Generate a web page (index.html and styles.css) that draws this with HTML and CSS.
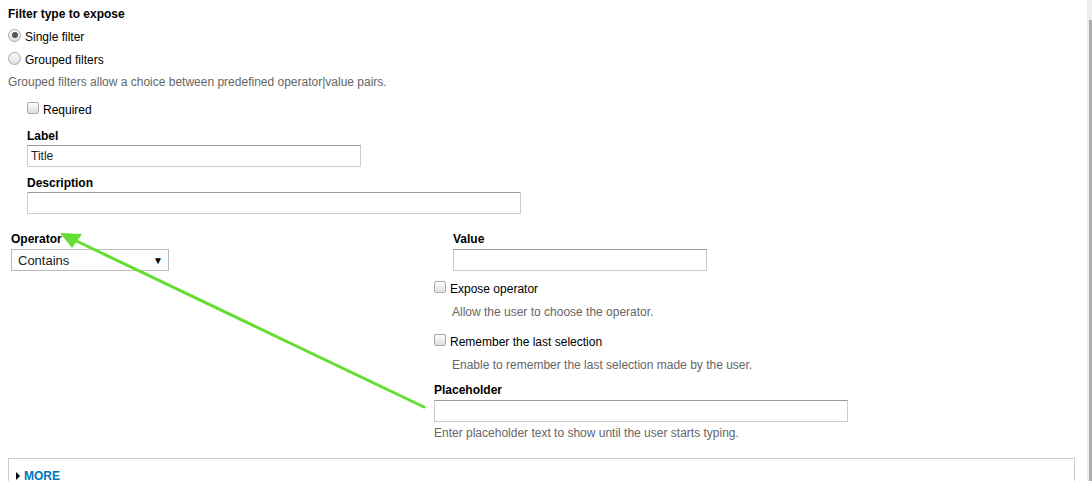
FILE: index.html
```html
<!DOCTYPE html>
<html lang="en">
<head>
    <meta charset="UTF-8">
    <title>Exposed filter settings</title>
    <link rel="stylesheet" href="styles.css">
</head>
<body>
    <div id="page">
        <div id="main">
            <div class="form-item">
                <div class="form-label">Filter type to expose</div>
                <label class="option-row"><input type="radio" name="type" checked> Single filter</label>
                <label class="option-row"><input type="radio" name="type"> Grouped filters</label>
                <div class="description">Grouped filters allow a choice between predefined operator|value pairs.</div>
            </div>

            <div class="exposed-settings">
                <label class="option-row required-row"><input type="checkbox"> Required</label>

                <div class="field">
                    <label class="form-label" for="label">Label</label>
                    <input type="text" id="label" class="text-short" value="Title">
                </div>

                <div class="field">
                    <label class="form-label" for="description">Description</label>
                    <input type="text" id="description" class="text-long">
                </div>
            </div>

            <div class="columns">
                <div class="col-left">
                    <label class="form-label" for="operator">Operator</label>
                    <div class="select-box" id="operator">
                        <span>Contains</span>
                        <span class="caret">&#9660;</span>
                    </div>
                </div>

                <div class="col-right">
                    <div class="value-item">
                        <label class="form-label" for="value">Value</label>
                        <input type="text" id="value" class="text-value">
                    </div>

                    <label class="option-row check-row"><input type="checkbox"> Expose operator</label>
                    <div class="description indented">Allow the user to choose the operator.</div>

                    <label class="option-row check-row remember"><input type="checkbox"> Remember the last selection</label>
                    <div class="description indented">Enable to remember the last selection made by the user.</div>

                    <div class="field placeholder-field">
                        <label class="form-label" for="placeholder">Placeholder</label>
                        <input type="text" id="placeholder" class="text-placeholder">
                        <div class="description">Enter placeholder text to show until the user starts typing.</div>
                    </div>
                </div>
            </div>

            <div class="more-box">
                <a href="#" class="more-link"><span class="more-caret"></span>MORE</a>
            </div>

            <!-- annotation arrow drawn over the form -->
            <svg class="arrow" width="440" height="190" viewBox="0 0 440 190">
                <line x1="424" y1="177" x2="66" y2="6" stroke="#66dd33" stroke-width="3" stroke-linecap="round"/>
                <polygon points="60,3 82,4 72,18" fill="#66dd33"/>
            </svg>
        </div>
        <div id="scroll-strip"><div class="thumb"></div></div>
    </div>
</body>
</html>
```

FILE: styles.css
```css
html, body {
    margin: 0;
    padding: 0;
    height: 100%;
    overflow: hidden;
}

body {
    font-family: "Liberation Sans", Arial, sans-serif;
    font-size: 12px;
    color: #000;
    background-color: #fff;
}

#page {
    display: flex;
    height: 100%;
}

#main {
    flex: 1;
    position: relative;
    padding: 6px 12px 0 8px;
}

#scroll-strip {
    width: 5px;
    background-color: #eeeeee;
}

#scroll-strip .thumb {
    margin: 20px 0 0 2px;
    height: 100%;
    background-color: #acacac;
}

.form-label {
    display: block;
    font-weight: bold;
    line-height: 16px;
}

.option-row {
    display: flex;
    align-items: center;
    height: 18px;
    line-height: 18px;
    margin-top: 5px;
}

.form-item .option-row:first-of-type {
    margin-top: 6px;
}

.description {
    color: #666;
    line-height: 16px;
}

.form-item .description {
    margin-top: 5px;
}

/* custom checkbox and radio */
input[type="checkbox"], input[type="radio"] {
    -webkit-appearance: none;
    appearance: none;
    width: 12px;
    height: 12px;
    margin: 0 4px 0 0;
    border: 1px solid #a9a9a9;
    background: linear-gradient(#fdfdfd, #dedede);
    box-sizing: border-box;
    position: relative;
    top: -2px;
}

input[type="checkbox"] {
    border-radius: 2px;
}

input[type="radio"] {
    width: 13px;
    height: 13px;
    border-radius: 50%;
}

input[type="radio"]:checked::after {
    content: "";
    position: absolute;
    left: 2.5px;
    top: 2.5px;
    width: 6px;
    height: 6px;
    border-radius: 50%;
    background-color: #555;
}

.exposed-settings {
    padding-left: 19px;
}

.required-row {
    margin-top: 11px;
}

.field {
    margin-top: 8px;
}

.exposed-settings .field:first-of-type {
    margin-top: 9px;
}

input[type="text"] {
    display: block;
    box-sizing: border-box;
    height: 22px;
    margin: 1px 0 0 0;
    padding: 1px 3px;
    border: 1px solid #ccc;
    border-top-color: #999;
    font-family: "Liberation Sans", Arial, sans-serif;
    font-size: 12px;
    color: #222;
    background: #fff;
}

.text-short {
    width: 334px;
}

.text-long {
    width: 494px;
}

.text-value {
    width: 254px;
}

.text-placeholder {
    width: 414px;
}

.columns {
    display: flex;
    margin-top: 17px;
}

.col-left {
    width: 426px;
    padding-left: 3px;
    box-sizing: border-box;
}

.col-right {
    flex: 1;
}

.select-box {
    display: flex;
    justify-content: space-between;
    align-items: center;
    box-sizing: border-box;
    width: 158px;
    height: 22px;
    margin-top: 2px;
    padding: 0 5px 0 6px;
    border: 1px solid #bbb;
    font-size: 13px;
    color: #222;
}

.select-box .caret {
    font-size: 10px;
    color: #000;
}

.value-item {
    padding-left: 19px;
}

.value-item input[type="text"] {
    margin-top: 2px;
}

.check-row {
    margin-top: 9px;
}

.remember {
    margin-top: 13px;
}

.description.indented {
    padding-left: 18px;
    margin-top: 6px;
}

.placeholder-field {
    margin-top: 9px;
}

.placeholder-field input[type="text"] {
    margin-top: 2px;
}

.placeholder-field .description {
    margin-top: 3px;
}

.more-box {
    margin-top: 17px;
    border: 1px solid #ccc;
    height: 60px;
    padding: 10px 7px;
}

.more-link {
    display: flex;
    align-items: center;
    color: #0074bd;
    font-weight: bold;
    font-size: 12px;
    text-decoration: none;
    line-height: 14px;
}

.more-caret {
    width: 0;
    height: 0;
    border-top: 4px solid transparent;
    border-bottom: 4px solid transparent;
    border-left: 4px solid #000;
    margin-right: 4px;
}

.arrow {
    position: absolute;
    left: 0;
    top: 230px;
    pointer-events: none;
}
```
